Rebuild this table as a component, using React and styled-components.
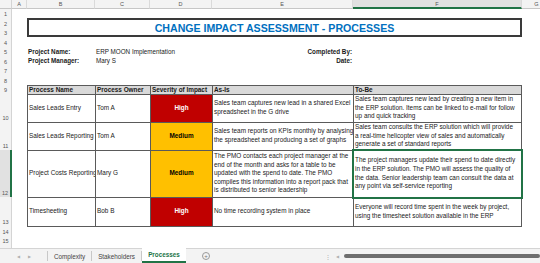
import React from "react"
import styled, { createGlobalStyle } from "styled-components"

const GlobalStyle = createGlobalStyle`
  html, body { margin: 0; padding: 0; background: #fff; }
  body { font-family: "Liberation Sans", Arial, sans-serif; }
  * { box-sizing: border-box; }
`

const columns = ["A", "B", "C", "D", "E", "F", "G"]
const rowHeights = [9.45, 9.45, 9.45, 9.45, 9.45, 9.45, 9.45, 9.45, 9.5, 28, 28, 47, 29, 9.5, 9.5]

const rows = [
  {
    name: "Sales Leads Entry",
    owner: "Tom A",
    severity: "High",
    asIs: ["Sales team captures new lead in a shared Excel", "spreadsheet in the G drive"],
    toBe: [
      "Sales team captures new lead by creating a new item in",
      "the ERP solution. Items can be linked to e-mail for follow",
      "up and quick tracking",
    ],
  },
  {
    name: "Sales Leads Reporting",
    owner: "Tom A",
    severity: "Medium",
    asIs: ["Sales team reports on KPIs monthly by analysing", "the spreadsheet and producing a set of graphs"],
    toBe: [
      "Sales team consults the ERP solution which will provide",
      "a real-time helicopter view of sales and automatically",
      "generate a set of standard reports",
    ],
  },
  {
    name: "Project Costs Reporting",
    owner: "Mary G",
    severity: "Medium",
    asIs: [
      "The PMO contacts each project manager at the",
      "end of the month and asks for a table to be",
      "updated with the spend to date. The PMO",
      "compiles this information into a report pack that",
      "is distributed to senior leadership",
    ],
    toBe: [
      "The project managers update their spend to date directly",
      "in the ERP solution. The PMO will assess the quality of",
      "the data. Senior leadership team can consult the data at",
      "any point via self-service reporting",
    ],
    selected: true,
  },
  {
    name: "Timesheeting",
    owner: "Bob B",
    severity: "High",
    asIs: ["No time recording system in place"],
    toBe: [
      "Everyone will record time spent in the week by project,",
      "using the timesheet solution available in the ERP",
    ],
  },
]

const severityColors = {
  High: { bg: "#c00000", fg: "#ffffff" },
  Medium: { bg: "#ffc000", fg: "#000000" },
}

const Lines = ({ lines }) =>
  lines.map((l, i) => (
    <React.Fragment key={i}>
      {l}
      {i < lines.length - 1 && <br />}
    </React.Fragment>
  ))

export default function App() {
  return (
    <Window>
      <GlobalStyle />
      <Sheet>
        <Corner />
        {columns.map((c) => (
          <ColHead key={c} $active={c === "F"}>{c}</ColHead>
        ))}
        {rowHeights.map((_, i) => (
          <RowHead key={i} $row={i + 2} $active={i + 1 === 12}>{i + 1}</RowHead>
        ))}
        <RowHead $row={17} />

        <TitleBox>CHANGE IMPACT ASSESSMENT - PROCESSES</TitleBox>

        <InfoLabel $row={6} $col={3}>Project Name:</InfoLabel>
        <InfoValue $row={6} $col={4}>ERP MOON Implementation</InfoValue>
        <InfoLabel $row={7} $col={3}>Project Manager:</InfoLabel>
        <InfoValue $row={7} $col={4}>Mary S</InfoValue>
        <InfoLabel $row={6} $col={6} $right>Completed By:</InfoLabel>
        <InfoLabel $row={7} $col={6} $right>Date:</InfoLabel>

        <Table>
          <HeadCell>Process Name</HeadCell>
          <HeadCell>Process Owner</HeadCell>
          <HeadCell>Severity of Impact</HeadCell>
          <HeadCell>As-Is</HeadCell>
          <HeadCell>To-Be</HeadCell>
          {rows.map((r) => (
            <React.Fragment key={r.name}>
              <Cell>{r.name}</Cell>
              <Cell>{r.owner}</Cell>
              <SeverityCell $bg={severityColors[r.severity].bg} $fg={severityColors[r.severity].fg}>
                {r.severity}
              </SeverityCell>
              <Cell><Lines lines={r.asIs} /></Cell>
              <Cell $selected={r.selected}><Lines lines={r.toBe} /></Cell>
            </React.Fragment>
          ))}
        </Table>
      </Sheet>

      <TabBar>
        <NavArrows>
          <Arrow>◀</Arrow>
          <Arrow>▶</Arrow>
        </NavArrows>
        <Tab>Complexity</Tab>
        <Tab>Stakeholders</Tab>
        <Tab $active>Processes</Tab>
        <AddTab>+</AddTab>
        <Spacer />
        <ScrollArea>
          <Dots>⋮</Dots>
          <Arrow>◀</Arrow>
          <Thumb />
        </ScrollArea>
      </TabBar>
    </Window>
  )
}

const Window = styled.div`
  width: 540px;
  height: 263px;
  display: flex;
  flex-direction: column;
  overflow: hidden;
  background: #fff;
`

const Sheet = styled.div`
  flex: 1;
  display: grid;
  grid-template-columns: 12px 15px 68px 55px 62px 141px 169px 30px;
  grid-template-rows: 9px ${rowHeights.map((h) => h + "px").join(" ")} 1fr;
  overflow: hidden;
`

const Corner = styled.div`
  grid-column: 1;
  grid-row: 1;
  background: #f3f3f3;
  border-right: 1px solid #d4d4d4;
  border-bottom: 1px solid #c6c6c6;
`

const ColHead = styled.div`
  grid-row: 1;
  display: flex;
  align-items: center;
  justify-content: center;
  font-size: 5.5px;
  color: #555;
  background: ${(p) => (p.$active ? "#e1e1e1" : "#f3f3f3")};
  border-right: 1px solid #dadada;
  border-bottom: ${(p) => (p.$active ? "2px solid #217346" : "1px solid #c6c6c6")};
`

const RowHead = styled.div`
  grid-column: 1;
  grid-row: ${(p) => p.$row};
  display: flex;
  align-items: flex-end;
  justify-content: center;
  padding-bottom: 1px;
  font-size: 5.5px;
  color: #555;
  background: ${(p) => (p.$active ? "#e1e1e1" : "#f3f3f3")};
  border-right: ${(p) => (p.$active ? "2px solid #217346" : "1px solid #d4d4d4")};
`

const TitleBox = styled.div`
  grid-column: 3 / 8;
  grid-row: 3 / 5;
  border: 2px solid #3a3a3a;
  display: flex;
  align-items: center;
  justify-content: center;
  font-size: 10.6px;
  font-weight: bold;
  color: #0070c0;
`

const InfoLabel = styled.div`
  grid-column: ${(p) => p.$col};
  grid-row: ${(p) => p.$row};
  display: flex;
  align-items: center;
  justify-content: ${(p) => (p.$right ? "flex-end" : "flex-start")};
  padding: 0 1px;
  font-size: 6.3px;
  font-weight: bold;
  color: #1a1a1a;
  white-space: nowrap;
`

const InfoValue = styled(InfoLabel)`
  grid-column: ${(p) => p.$col} / span 2;
  font-weight: normal;
`

const Table = styled.div`
  grid-column: 3 / 8;
  grid-row: 10 / 15;
  align-self: start;
  display: grid;
  grid-template-columns: 67px 54px 61px 140px 167px;
  grid-template-rows: 8px 27px 27px 46px 28px;
  gap: 1px;
  padding: 1px;
  background: #5a5a5a;
`

const Cell = styled.div`
  position: relative;
  display: flex;
  flex-direction: column;
  justify-content: center;
  padding: 0 1px;
  font-size: 6.4px;
  line-height: 8.6px;
  color: #1a1a1a;
  background: #fff;
  white-space: nowrap;
  overflow: ${(p) => (p.$selected ? "visible" : "hidden")};
  ${(p) =>
    p.$selected &&
    `
    outline: 2px solid #217346;
    outline-offset: 0px;
    z-index: 1;
  `}
`

const HeadCell = styled(Cell)`
  font-weight: bold;
  background: #d9d9d9;
  line-height: 8px;
`

const SeverityCell = styled(Cell)`
  align-items: center;
  font-weight: bold;
  background: ${(p) => p.$bg};
  color: ${(p) => p.$fg};
`

const TabBar = styled.div`
  height: 15px;
  flex: none;
  display: flex;
  align-items: stretch;
  background: #f3f3f3;
  border-top: 1px solid #d4d4d4;
  font-size: 6.3px;
  color: #444;
`

const NavArrows = styled.div`
  width: 48px;
  display: flex;
  align-items: center;
  justify-content: center;
  gap: 8px;
  border-right: 1px solid #c8c8c8;
  margin: 2px 0;
`

const Arrow = styled.span`
  font-size: 4px;
  color: #b0b0b0;
`

const Tab = styled.div`
  display: flex;
  align-items: center;
  justify-content: center;
  padding: 0 6px;
  min-width: 44px;
  color: ${(p) => (p.$active ? "#217346" : "#444")};
  font-weight: ${(p) => (p.$active ? "bold" : "normal")};
  background: ${(p) => (p.$active ? "#fff" : "transparent")};
  border-bottom: ${(p) => (p.$active ? "2px solid #217346" : "none")};
  border-right: ${(p) => (p.$active ? "none" : "1px solid #c8c8c8")};
  margin-top: ${(p) => (p.$active ? "-1px" : "2px")};
  margin-bottom: ${(p) => (p.$active ? "0" : "2px")};
`

const AddTab = styled.div`
  align-self: center;
  width: 8px;
  height: 8px;
  margin-left: 16px;
  border-radius: 50%;
  border: 1px solid #9a9a9a;
  display: flex;
  align-items: center;
  justify-content: center;
  font-size: 6px;
  line-height: 1;
  color: #777;
`

const Spacer = styled.div`
  flex: 1;
`

const ScrollArea = styled.div`
  width: 215px;
  display: flex;
  align-items: center;
  gap: 5px;
`

const Dots = styled.span`
  font-size: 6px;
  color: #aaa;
`

const Thumb = styled.div`
  flex: 1;
  height: 4px;
  border-radius: 2px;
  background: #6e6e6e;
`
